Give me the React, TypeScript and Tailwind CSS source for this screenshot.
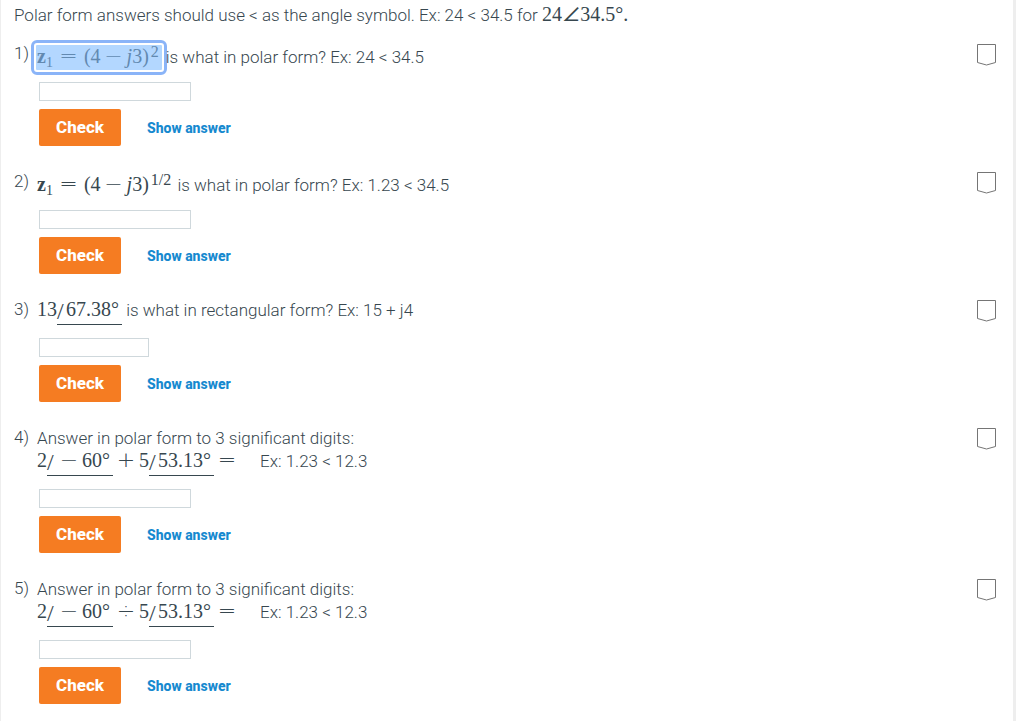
import { useId, useState } from "react";
import type { ReactNode } from "react";
import clsx from "clsx";

type Question = {
  prompt: ReactNode;
  tall?: boolean;
  short?: boolean;
};

function Formula({ children }: { children: ReactNode }) {
  return (
    <span className="whitespace-nowrap font-['Liberation_Serif',serif] text-xl leading-4 font-normal">{children}</span>
  );
}

function Operator({ children, wide = false }: { children: ReactNode; wide?: boolean }) {
  return (
    <span
      className={clsx(
        "inline-block text-center font-['DejaVu_Sans',sans-serif] text-[22px] font-extralight leading-4",
        wide ? "w-[31px]" : "w-[26px]",
      )}
    >
      {children}
    </span>
  );
}

// Phasor angle: slash and value over a rule
function Angle({ children }: { children: ReactNode }) {
  return (
    <span className="border-b border-[#37474f] pr-[3px] pb-1">
      <span className="inline-block w-[9px] align-[-3px] text-2xl leading-3">/</span>
      {children}
    </span>
  );
}

function PowerFormula({ exponent }: { exponent: string }) {
  return (
    <Formula>
      <b className="font-bold">z</b>
      <sub className="text-sm">1</sub>
      <Operator wide>=</Operator>(4<Operator>−</Operator>
      <i>j</i>3)<sup className="top-[-6px] px-0.5 text-base">{exponent}</sup>
    </Formula>
  );
}

function PhasorPair({ operator }: { operator: string }) {
  return (
    <>
      Answer in polar form to 3 significant digits:
      <br />
      <Formula>
        2
        <Angle>
          <Operator>−</Operator>60°
        </Angle>
        <Operator>{operator}</Operator>5<Angle>53.13°</Angle>
        <Operator>=</Operator>
      </Formula>
      <span className="ml-5">Ex: 1.23 &lt; 12.3</span>
    </>
  );
}

const questions: Question[] = [
  {
    tall: true,
    prompt: (
      <>
        <span className="-ml-px mr-1 inline-block rounded-[1px] bg-[#b3d7ff] px-px text-[#6289b0] outline-3 outline-offset-2 outline-[#8ab4f8]">
          <PowerFormula exponent="2" />
        </span>
        is what in polar form? Ex: 24 &lt; 34.5
      </>
    ),
  },
  {
    tall: true,
    prompt: (
      <>
        <PowerFormula exponent="1/2" /> is what in polar form? Ex: 1.23 &lt; 34.5
      </>
    ),
  },
  {
    short: true,
    prompt: (
      <>
        <Formula>
          13<Angle>67.38°</Angle>
        </Formula>{" "}
        is what in rectangular form? Ex: 15 + j4
      </>
    ),
  },
  { prompt: <PhasorPair operator="+" /> },
  { prompt: <PhasorPair operator="÷" /> },
];

function Bookmark() {
  const [saved, setSaved] = useState(false);

  return (
    <button
      type="button"
      aria-label="Bookmark question"
      aria-pressed={saved}
      onClick={() => setSaved(!saved)}
      className="mt-0.5 h-[22px] w-[19px] shrink-0 self-start"
    >
      <svg viewBox="0 0 19 22" className="block" fill={saved ? "#757575" : "none"} stroke="#757575">
        <path d="M.5.5h18v18l-9 2.5-9-2.5z" />
      </svg>
    </button>
  );
}

function QuestionItem({ question, number }: { question: Question; number: number }) {
  const promptId = useId();

  return (
    <li className="flex">
      <span className="w-[23px] shrink-0">{number})</span>
      <form className="min-w-0 flex-1" onSubmit={(event) => event.preventDefault()}>
        <p id={promptId} className={question.tall ? "pt-[3px] pb-3 leading-[25px]" : "pt-px pb-4"}>
          {question.prompt}
        </p>
        <input
          type="text"
          aria-labelledby={promptId}
          className={clsx(
            "ml-0.5 block h-[19px] border border-[#cfd8dc] px-1 text-sm outline-none focus:border-[#1e88c9]",
            question.short ? "w-[110px]" : "w-[152px]",
          )}
        />
        <div className="mt-2 ml-0.5 flex items-center gap-[26px]">
          <button type="submit" className="h-[37px] w-[82px] rounded-xs bg-[#f57c22] font-extrabold text-white">
            Check
          </button>
          <button type="button" className="text-sm font-extrabold text-[#1689cf]">
            Show answer
          </button>
        </div>
      </form>
      <Bookmark />
    </li>
  );
}

export default function App() {
  return (
    <div className="min-h-screen bg-white pr-2">
      <main className="min-h-screen border-r-3 border-l border-[#eeeeee] pt-1 pr-[17px] pl-[13px] font-[Roboto,sans-serif] text-[17px] font-light leading-[23px] text-[#37474f]">
        <p className="mb-[15px]">
          Polar form answers should use &lt; as the angle symbol. Ex: 24 &lt; 34.5 for{" "}
          <Formula>
            24<span className="font-['DejaVu_Math_TeX_Gyre','DejaVu_Sans',sans-serif]">∠</span>34.5°.
          </Formula>
        </p>
        <ol className="flex flex-col gap-6">
          {questions.map((question, index) => (
            <QuestionItem key={index} question={question} number={index + 1} />
          ))}
        </ol>
      </main>
    </div>
  );
}
